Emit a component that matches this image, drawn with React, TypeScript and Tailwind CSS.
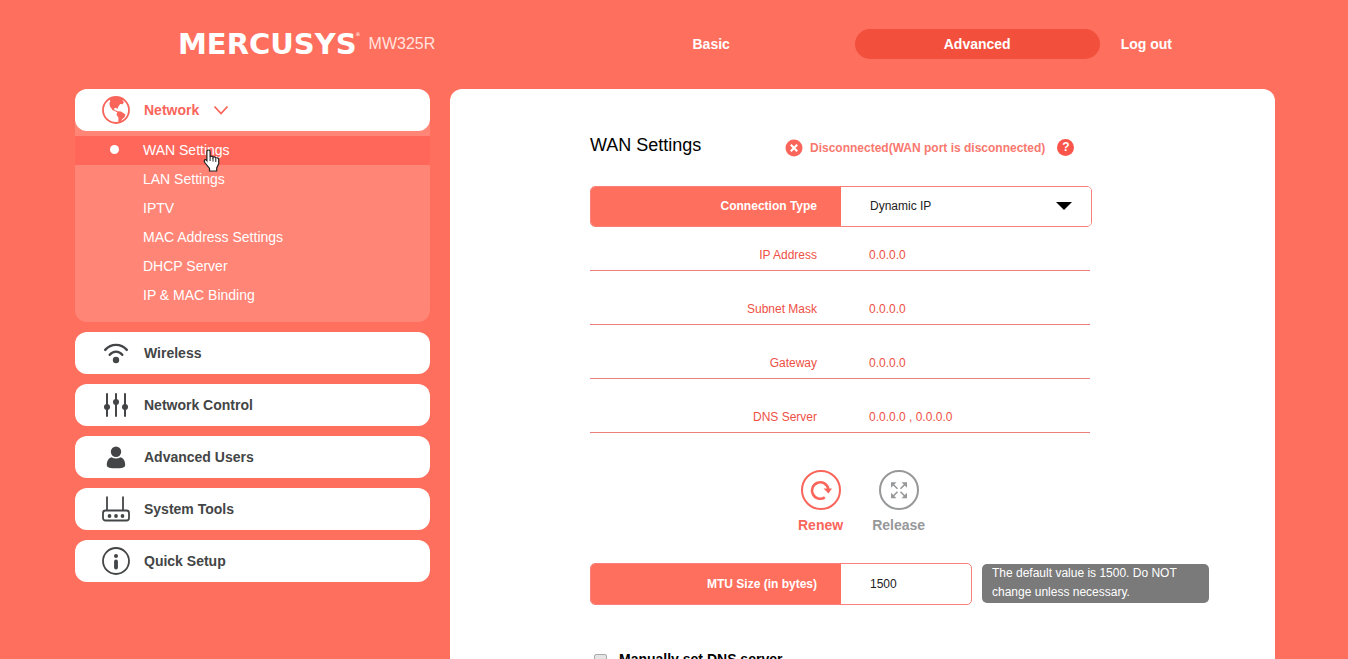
import { useState } from "react";

const subItems = [
  "WAN Settings",
  "LAN Settings",
  "IPTV",
  "MAC Address Settings",
  "DHCP Server",
  "IP & MAC Binding",
];

const menuItems = [
  { label: "Wireless", icon: <WirelessIcon /> },
  { label: "Network Control", icon: <ControlIcon /> },
  { label: "Advanced Users", icon: <UserIcon /> },
  { label: "System Tools", icon: <RouterIcon /> },
  { label: "Quick Setup", icon: <InfoIcon /> },
];

const wanStatus = [
  { label: "IP Address", value: "0.0.0.0" },
  { label: "Subnet Mask", value: "0.0.0.0" },
  { label: "Gateway", value: "0.0.0.0" },
  { label: "DNS Server", value: "0.0.0.0 , 0.0.0.0" },
];

export default function App() {
  return (
    <div className="flex h-screen flex-col overflow-hidden bg-[#ff6f5e] pr-[73px] pl-[75px] font-['Liberation_Sans',Arial,sans-serif] text-sm">
      <Header />
      <div className="flex min-h-0 flex-1 gap-5">
        <Sidebar />
        <WanSettings />
      </div>
    </div>
  );
}

function Header() {
  return (
    <header className="flex h-[89px] shrink-0 items-center px-[103px] pb-[2px] text-white">
      <div className="flex items-center gap-3">
        <span className="relative font-['DejaVu_Sans',sans-serif] text-[29px] leading-8 font-bold">
          MERCUSYS
          <span className="absolute top-1 -right-1 text-[5px] leading-none font-normal">®</span>
        </span>
        <span className="text-base text-[#ffe3df]">MW325R</span>
      </div>
      <nav className="ml-auto flex items-center gap-[21px] font-bold">
        <a href="#basic" className="w-[245px] rounded-full text-center leading-[30px]">Basic</a>
        <a href="#advanced" className="w-[245px] rounded-full bg-[#f24f3d] text-center leading-[30px]">Advanced</a>
        <a href="#logout">Log out</a>
      </nav>
    </header>
  );
}

function Sidebar() {
  const [selected, setSelected] = useState("WAN Settings");

  return (
    <aside className="flex w-[355px] shrink-0 flex-col gap-[10px]">
      <div className="rounded-xl bg-[#ff8577] pb-3">
        <button type="button" className="flex h-[42px] w-full items-center gap-[14px] rounded-xl bg-white pl-[27px] font-bold text-[#f9655a]">
          <GlobeIcon />
          Network
          <svg className="h-4 w-4" viewBox="0 0 16 16" fill="none" stroke="currentColor" strokeWidth="1.800">
            <path d="M1.500 4.500 8 11.500l6.500-7" />
          </svg>
        </button>
        <ul className="pt-[5px] text-white">
          {subItems.map((item) => (
            <li key={item} className={selected === item ? "relative bg-[#ff675b]" : ""}>
              <button
                type="button"
                onClick={() => setSelected(item)}
                className="flex h-[29px] w-full items-center pb-[2px] pl-[35px]"
              >
                <span className={`mr-6 h-[9px] w-[9px] rounded-full ${selected === item ? "bg-white" : ""}`} />
                {item}
              </button>
              {selected === item && <HandPointer />}
            </li>
          ))}
        </ul>
      </div>
      {menuItems.map((item) => (
        <button
          key={item.label}
          type="button"
          className="flex h-[42px] shrink-0 items-center gap-[14px] rounded-xl bg-white pl-[27px] font-bold text-[#434546]"
        >
          {item.icon}
          {item.label}
        </button>
      ))}
    </aside>
  );
}

function WanSettings() {
  const [type, setType] = useState("Dynamic IP");
  const [mtu, setMtu] = useState("1500");

  return (
    <main className="min-w-0 flex-1 rounded-t-xl bg-white px-[140px] pt-11 text-xs">
      <div className="flex h-[53px] items-start">
        <h1 className="w-[195px] text-lg leading-6 text-black">WAN Settings</h1>
        <p className="flex h-[30px] items-center gap-[7px] font-bold text-[#f9786f]">
          <svg className="h-[18px] w-[18px]" viewBox="0 0 18 18">
            <circle cx="9" cy="9" r="8.500" fill="#f9655a" />
            <path d="m5.800 5.800 6.400 6.400m0-6.400-6.400 6.400" stroke="#fff" strokeWidth="2.200" />
          </svg>
          Disconnected(WAN port is disconnected)
        </p>
        <button
          type="button"
          aria-label="Help"
          className="mt-[6px] ml-3 h-[17px] w-[17px] rounded-full bg-[#f9554b] text-center text-xs leading-[17px] font-bold text-white"
        >
          ?
        </button>
      </div>

      <div className="flex h-[41px] w-[502px] overflow-hidden rounded-[5px] border border-[#f97f78]">
        <label htmlFor="type" className="w-[250px] bg-[#ff6f5e] pr-6 text-right leading-[38px] font-bold text-white">
          Connection Type
        </label>
        <div className="relative flex-1">
          <select
            id="type"
            value={type}
            onChange={(e) => setType(e.target.value)}
            className="h-full w-full appearance-none bg-white pb-[2px] pl-[29px] text-[#222] outline-none"
          >
            <option>Dynamic IP</option>
            <option>Static IP</option>
            <option>PPPoE</option>
          </select>
          <svg className="pointer-events-none absolute top-[15px] right-[19px] h-2 w-4" viewBox="0 0 16 8">
            <path d="M0 0h16L8 8z" fill="#000" />
          </svg>
        </div>
      </div>

      <table className="w-[500px] border-collapse text-[#ee5045]">
        <tbody>
          {wanStatus.map((row) => (
            <tr key={row.label} className="h-[54px] border-b border-[#ea7f7b] first:h-[43px]">
              <th scope="row" className="w-[251px] pr-6 pb-[7px] text-right align-bottom font-normal">{row.label}</th>
              <td className="pb-[7px] pl-7 align-bottom">{row.value}</td>
            </tr>
          ))}
        </tbody>
      </table>

      <div className="mt-[37px] flex gap-[29px] pl-[208px] text-sm font-bold">
        <button type="button" className="flex flex-col items-center gap-[5px] text-[#f9655a]">
          <svg className="h-10 w-10" viewBox="0 0 40 40" fill="none" stroke="currentColor">
            <circle cx="20" cy="20" r="19" strokeWidth="2" />
            <path d="M23.800 27.300A8.200 8.200 0 1 1 27.300 19" strokeWidth="2.600" />
            <path d="M22.500 18.500h8.500L27.500 23.500z" fill="currentColor" stroke="none" />
          </svg>
          Renew
        </button>
        <button type="button" className="flex flex-col items-center gap-[5px] text-[#97989a]">
          <svg className="h-10 w-10" viewBox="0 0 40 40" fill="none" stroke="currentColor">
            <circle cx="20" cy="20" r="19" strokeWidth="2" />
            <path d="m18.500 18.800-5-5m8 5 5-5m-5 8 5 5m-8-5-5 5" strokeWidth="1.600" />
            <path d="M12 12.300h5.500L12 17.800zM28 12.300h-5.500l5.500 5.500zM12 28.300h5.500L12 22.800zM28 28.300h-5.500l5.500-5.500z" fill="currentColor" stroke="none" />
          </svg>
          Release
        </button>
      </div>

      <div className="mt-7 flex items-center gap-[10px]">
        <div className="flex h-[42px] w-[382px] shrink-0 overflow-hidden rounded-[5px] border border-[#f97f78]">
          <label htmlFor="mtu" className="w-[250px] shrink-0 bg-[#ff6f5e] pr-6 text-right leading-10 font-bold text-white">
            MTU Size (in bytes)
          </label>
          <input
            id="mtu"
            value={mtu}
            onChange={(e) => setMtu(e.target.value)}
            className="min-w-0 flex-1 pl-[29px] text-[#222] outline-none"
          />
        </div>
        <p className="w-[227px] shrink-0 rounded-[5px] bg-[#7a7a7a] px-[10px] pb-[1px] leading-[19px] text-white">
          The default value is 1500. Do NOT change unless necessary.
        </p>
      </div>

      <div className="mt-11 flex items-start gap-3 pl-1">
        <input
          id="dns"
          type="checkbox"
          className="mt-[5px] h-[13px] w-[13px] appearance-none rounded-[2px] border border-[#aaa] bg-[#e4e4e4] checked:bg-[#ff6f5e]"
        />
        <label htmlFor="dns" className="text-sm font-bold text-black">Manually set DNS server</label>
      </div>
    </main>
  );
}

function GlobeIcon() {
  return (
    <svg className="h-7 w-7" viewBox="0 0 28 28">
      <circle cx="14" cy="14" r="13" fill="none" stroke="currentColor" strokeWidth="1.800" />
      <path
        d="M7.500 3.200C10 1.500 14 .800 18 1.800l3.500 1.400-1 1.300 1.400 1.800-1.200 2-2.500-.300-2 2.700-.700 2.300-1.500-1.300-2 .900.600 1.600 2.200.600 1.200 1.500-1.500-.300-4-2-2.500-3.600-.600-3.400.900-1.800z"
        fill="currentColor"
      />
      <path d="m15.500 15.200 3.500.300 4.500 3-1 2.700-2.200 1.700-1.500 2.800-2.500 1 .200-5-2-3z" fill="currentColor" />
    </svg>
  );
}

function WirelessIcon() {
  return (
    <svg className="h-7 w-7" viewBox="0 0 28 28" fill="none" stroke="currentColor" strokeWidth="2.400" strokeLinecap="round">
      <path d="M3.200 10.900c6-6.700 15.600-6.700 21.600 0M7.700 15.800c3.500-4.200 9.100-4.200 12.600 0" />
      <circle cx="14" cy="21" r="3.200" fill="currentColor" stroke="none" />
    </svg>
  );
}

function ControlIcon() {
  return (
    <svg className="h-7 w-7" viewBox="0 0 28 28" fill="none" stroke="currentColor" strokeWidth="2" strokeLinecap="round">
      <path d="M5 3v22M14 3v22M23 3v22" />
      <g fill="currentColor" stroke="none">
        <circle cx="5" cy="16" r="3" />
        <circle cx="14" cy="11" r="3" />
        <circle cx="23" cy="16" r="3" />
      </g>
    </svg>
  );
}

function UserIcon() {
  return (
    <svg className="h-7 w-7" viewBox="0 0 28 28" fill="currentColor">
      <circle cx="14" cy="8.700" r="5.200" />
      <path d="M9.500 14.200c2.800 1.700 6.200 1.700 9 0 3 .800 4.700 3.800 4.700 7.800 0 2.800-3.700 3.300-9.200 3.300s-9.200-.500-9.200-3.300c0-4 1.700-7 4.700-7.800z" />
    </svg>
  );
}

function RouterIcon() {
  return (
    <svg className="h-7 w-7" viewBox="0 0 28 28" fill="none" stroke="currentColor" strokeWidth="1.800">
      <path d="M5 1.500v14M21 1.500v14" />
      <rect x="1" y="15.500" width="26" height="10" rx="2.500" />
      <g fill="currentColor" stroke="none">
        <circle cx="7.500" cy="21" r="1.900" />
        <circle cx="14" cy="21" r="1.900" />
        <circle cx="20.500" cy="21" r="1.900" />
      </g>
    </svg>
  );
}

function InfoIcon() {
  return (
    <svg className="h-7 w-7" viewBox="0 0 28 28" fill="none" stroke="currentColor">
      <circle cx="14" cy="14" r="13" strokeWidth="1.800" />
      <circle cx="14" cy="9" r="2" fill="currentColor" stroke="none" />
      <path d="M14 14.500v6" strokeWidth="3.800" strokeLinecap="round" />
    </svg>
  );
}

function HandPointer() {
  return (
    <svg className="pointer-events-none absolute top-3 left-[127px] z-10 h-6 w-[20px]" viewBox="0 0 20 24">
      <path
        d="M6.500 2c1 0 1.600.700 1.600 1.600V9c.300-1.300 2.700-1.200 2.900.400.600-1 2.600-.700 2.800.800.800-.900 2.900-.400 2.900 1.400v4.200l-2 4.200V23H7.500v-2.600L2.800 14.500c-1-1.500-.500-2.700.400-2.900.800-.100 1.200.300 1.700 1V3.600C4.900 2.700 5.500 2 6.500 2z"
        fill="#fff"
        stroke="#222"
        strokeWidth="1.200"
      />
      <path d="M8.100 9v4M11 10v3.500M13.800 11v3" stroke="#222" fill="none" />
    </svg>
  );
}
